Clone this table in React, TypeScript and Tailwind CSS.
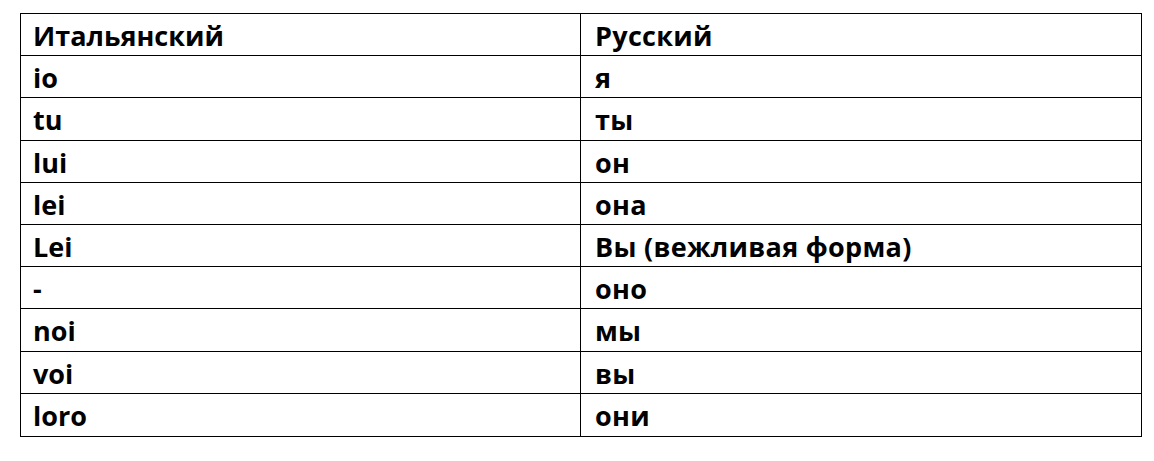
const rows: [string, string][] = [
  ["Итальянский", "Русский"],
  ["io", "я"],
  ["tu", "ты"],
  ["lui", "он"],
  ["lei", "она"],
  ["Lei", "Вы (вежливая форма)"],
  ["-", "оно"],
  ["noi", "мы"],
  ["voi", "вы"],
  ["loro", "они"],
];

export default function App() {
  return (
    <div className="w-[1154px] h-[461px] bg-white pt-[13px] pl-[20px]" style={{ fontFamily: '"Open Sans", "Noto Sans", sans-serif' }}>
      <div className="w-[1122px] border-[1.5px] border-black">
        {rows.map(([a, b], i) => (
          <div key={i} className={`flex h-[42.2px] ${i < rows.length - 1 ? "border-b-[1.5px] border-black" : ""}`}>
            <div className="w-[560px] border-r-[1.5px] border-black pl-[12px] flex items-center pt-[2px] text-[27px] leading-none font-bold text-black">
              {a}
            </div>
            <div className="flex-1 pl-[14px] flex items-center pt-[2px] text-[27px] leading-none font-bold text-black tracking-[0.3px]">
              {b}
            </div>
          </div>
        ))}
      </div>
    </div>
  );
}
